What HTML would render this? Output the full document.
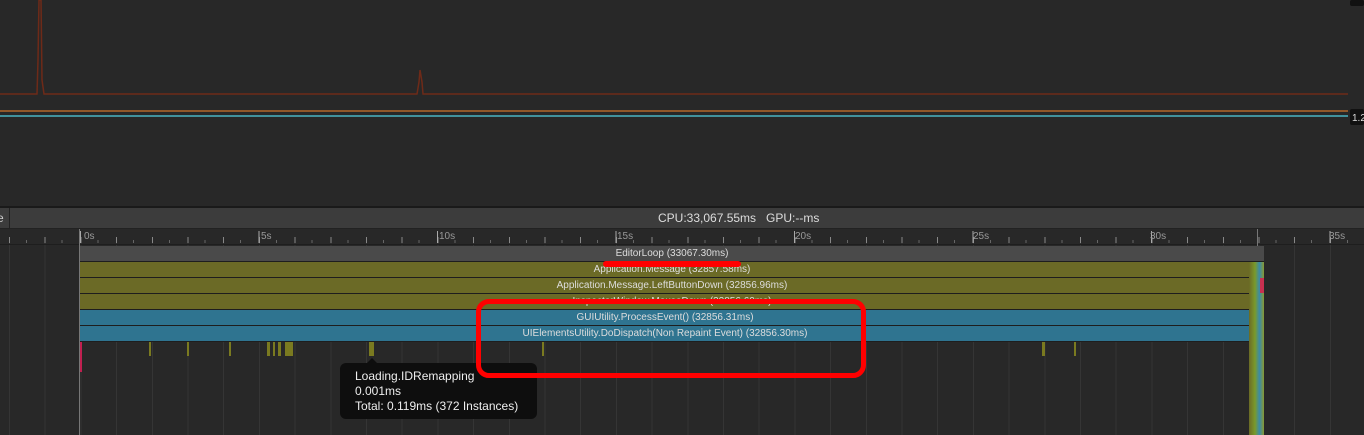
<!DOCTYPE html>
<html><head><style>
body{margin:0;width:1364px;height:435px;overflow:hidden;background:#282828;font-family:"Liberation Sans",sans-serif;position:relative}
div{position:absolute;box-sizing:border-box}
.bar{height:16px;border-bottom:1px solid #1e1e1e;color:#ddd;font-size:10px;line-height:15px;text-align:center}
.t{color:#999;font-size:10px;top:231px}
</style></head><body>
<svg width="1364" height="206" style="position:absolute;left:0;top:0">
<polyline points="0,94 37,94 38,60 39,0 41,0 42,80 44,94 417,94 419,82 420,70 422,82 423,94 1348,94" fill="none" stroke="#6e2a18" stroke-width="1.5"/>
<line x1="0" y1="111" x2="1348" y2="111" stroke="#b4692a" stroke-width="1.5"/>
<line x1="0" y1="116" x2="1348" y2="116" stroke="#4ab6c4" stroke-width="1.5"/>
<rect x="1350" y="0" width="14" height="6" rx="2" fill="#111"/>
<rect x="1350" y="109" width="14" height="16" rx="2" fill="#111"/>
<text x="1352" y="121" fill="#ddd" font-size="10" font-family="Liberation Sans">1.2</text>
</svg>
<div style="left:0;top:206px;width:1364px;height:2px;background:#1a1a1a"></div>
<div style="left:0;top:208px;width:1364px;height:21px;background:#3c3c3c;border-bottom:1px solid #222"></div>
<div style="left:0;top:208px;width:10px;height:21px;border-right:1px solid #222;color:#ccc;font-size:12px;line-height:20px;text-indent:-3px">e</div>
<div style="left:658px;top:211px;color:#ddd;font-size:12px">CPU:33,067.55ms&nbsp;&nbsp; GPU:--ms</div>
<!-- grid lines -->
<div style="left:8.6px;top:241px;width:1356px;height:194px;background:repeating-linear-gradient(90deg,#353535 0,#353535 1px,transparent 1px,transparent 35.7px)"></div>
<!-- major ticks -->
<div style="left:8.6px;top:237px;width:1356px;height:6px;background:repeating-linear-gradient(90deg,#888 0,#888 1px,transparent 1px,transparent 35.7px)"></div>
<div style="left:26.45px;top:240px;width:1338px;height:3px;background:repeating-linear-gradient(90deg,#666 0,#666 1px,transparent 1px,transparent 35.7px)"></div>
<div style="left:80px;top:231px;width:1300px;height:12px;background:repeating-linear-gradient(90deg,#aaa 0,#aaa 1px,transparent 1px,transparent 178.5px)"></div>
<div style="left:0;top:244px;width:1364px;height:1px;background:#1e1e1e"></div>
<div style="left:79px;top:229px;width:1px;height:206px;background:#777"></div>
<div style="left:1257px;top:229px;width:1px;height:206px;background:#777"></div>
<div class="t" style="left:84px">0s</div><div class="t" style="left:261px">5s</div><div class="t" style="left:439px">10s</div><div class="t" style="left:617px">15s</div><div class="t" style="left:795px">20s</div><div class="t" style="left:973px">25s</div><div class="t" style="left:1150px">30s</div><div class="t" style="left:1329px">35s</div>
<div class="bar" style="left:80px;top:246px;width:1184px;background:#4a4a4a">EditorLoop (33067.30ms)</div>
<div class="bar" style="left:80px;top:262px;width:1184px;background:#6b6a26">Application.Message (32857.58ms)</div>
<div class="bar" style="left:80px;top:278px;width:1184px;background:#6b6a26">Application.Message.LeftButtonDown (32856.96ms)</div>
<div class="bar" style="left:80px;top:294px;width:1184px;background:#6b6a26">InspectorWindow.MouseDown (32856.60ms)</div>
<div class="bar" style="left:80px;top:310px;width:1170px;background:#2f7490">GUIUtility.ProcessEvent() (32856.31ms)</div>
<div class="bar" style="left:80px;top:326px;width:1170px;background:#2f7490">UIElementsUtility.DoDispatch(Non Repaint Event) (32856.30ms)</div>
<div style="left:1249px;top:262px;width:15px;height:173px;background:linear-gradient(90deg,#6b6a26,#7a9a2a 40%,#3a8aa8 70%,#8a9a30)"></div>
<div style="left:1260px;top:278px;width:4px;height:15px;background:#c83050"></div>
<div style="left:80px;top:342px;width:2px;height:30px;background:#c02050"></div>
<div style="top:342px;left:149px;width:2px;height:14px;background:#7a7a20"></div>
<div style="top:342px;left:187px;width:2px;height:14px;background:#7a7a20"></div>
<div style="top:342px;left:229px;width:2px;height:14px;background:#7a7a20"></div>
<div style="top:342px;left:267px;width:3px;height:14px;background:#7a7a20"></div>
<div style="top:342px;left:273px;width:2px;height:14px;background:#7a7a20"></div>
<div style="top:342px;left:278px;width:3px;height:14px;background:#7a7a20"></div>
<div style="top:342px;left:285px;width:8px;height:14px;background:#7a7a20"></div>
<div style="top:342px;left:369px;width:5px;height:14px;background:#7a7a20"></div>
<div style="top:342px;left:542px;width:2px;height:14px;background:#7a7a20"></div>
<div style="top:342px;left:1042px;width:3px;height:14px;background:#7a7a20"></div>
<div style="top:342px;left:1074px;width:2px;height:14px;background:#7a7a20"></div>
<div style="left:340px;top:363px;width:197px;height:56px;background:#0e0e0e;border-radius:6px;color:#eee;font-size:12px;line-height:15px;padding:6px 0 0 15px">Loading.IDRemapping<br>0.001ms<br>Total: 0.119ms (372 Instances)</div>
<div style="left:366px;top:358px;width:0;height:0;border-left:6px solid transparent;border-right:6px solid transparent;border-bottom:6px solid #0e0e0e"></div>
<div style="left:603px;top:261px;width:138px;height:6px;background:#f00;border-radius:3px"></div>
<div style="left:476px;top:299px;width:390px;height:79px;border:5px solid #f00;border-radius:13px"></div>
</body></html>
